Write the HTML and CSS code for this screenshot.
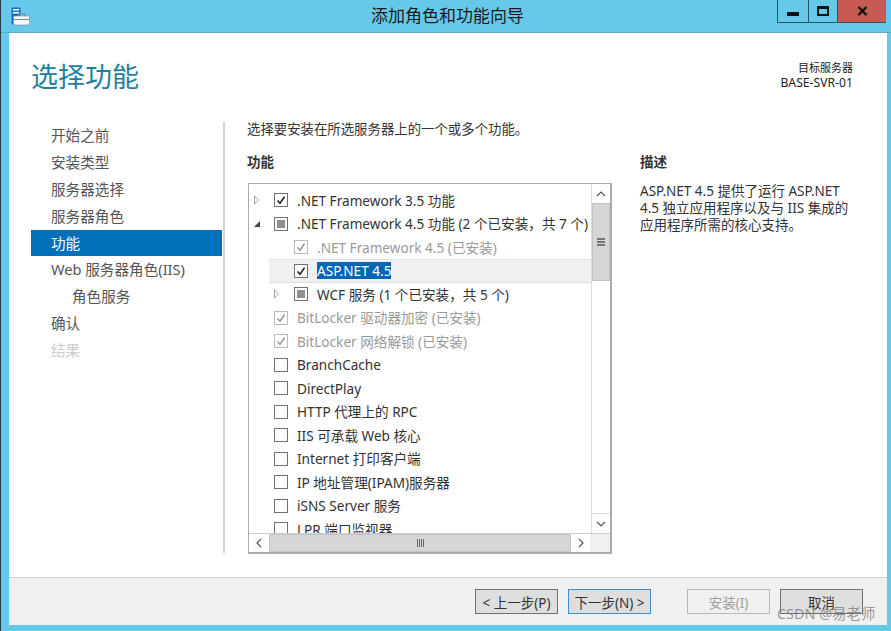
FILE: index.html
```html
<!DOCTYPE html>
<html lang="zh-CN">
<head>
<meta charset="utf-8">
<title>添加角色和功能向导</title>
<link rel="stylesheet" href="styles.css">
</head>
<body>
<div class="window">
  <header class="titlebar">
    <svg class="app-icon" width="19" height="19" viewBox="0 0 19 19">
      <rect x="0.5" y="0.5" width="9" height="17" fill="#1a6fc0"/>
      <rect x="2" y="2" width="6" height="1.5" fill="#fff"/>
      <rect x="2" y="5" width="6" height="1.5" fill="#fff"/>
      <rect x="2.5" y="9" width="16" height="9" rx="1" fill="#f4f7f9" stroke="#6e8ba0" stroke-width="0.6"/>
      <path d="M8 9V7h5.5v2" fill="none" stroke="#6e8ba0" stroke-width="1.2"/>
      <path d="M3 12.5h15" stroke="#6e8ba0" stroke-width="1"/>
    </svg>
    <div class="title-text">添加角色和功能向导</div>
    <div class="win-buttons">
      <div class="win-btn min"><span class="min-glyph"></span></div>
      <div class="win-btn max"><span class="max-glyph"></span></div>
      <div class="win-btn close"><svg width="11" height="10" viewBox="0 0 11 10"><path d="M1.5 1l8 8M9.5 1l-8 8" stroke="#111" stroke-width="2.4"/></svg></div>
    </div>
  </header>
  <div class="client">
    <div class="page-head">
      <h1 class="page-title">选择功能</h1>
      <div class="target">
        <div>目标服务器</div>
        <div class="target-name">BASE-SVR-01</div>
      </div>
    </div>
    <div class="page-body">
      <nav class="steps">
        <div class="step">开始之前</div>
        <div class="step">安装类型</div>
        <div class="step">服务器选择</div>
        <div class="step">服务器角色</div>
        <div class="step active">功能</div>
        <div class="step">Web 服务器角色(IIS)</div>
        <div class="step sub">角色服务</div>
        <div class="step">确认</div>
        <div class="step off">结果</div>
      </nav>
      <main class="main">
        <p class="intro">选择要安装在所选服务器上的一个或多个功能。</p>
        <div class="columns">
          <section class="features">
            <h2 class="col-head">功能</h2>
            <div class="listbox">
              <div class="list-top">
                <div class="rows">
                  <div class="row"><span class="exp closed"></span><span class="cb checked"><svg viewBox="0 0 12 12"><path d="M2.5 6.5l2.5 2.7 4.5-6.4" fill="none" stroke="#222" stroke-width="1.6"/></svg></span><span class="lbl">.NET Framework 3.5 功能</span></div>
                  <div class="row"><span class="exp open"></span><span class="cb"><i class="fill"></i></span><span class="lbl">.NET Framework 4.5 功能 (2 个已安装，共 7 个)</span></div>
                  <div class="row l2 dim"><span class="cb dis"><svg viewBox="0 0 12 12"><path d="M2.5 6.5l2.5 2.7 4.5-6.4" fill="none" stroke="#9a9a9a" stroke-width="1.6"/></svg></span><span class="lbl">.NET Framework 4.5 (已安装)</span></div>
                  <div class="row l2 current"><span class="cb checked"><svg viewBox="0 0 12 12"><path d="M2.5 6.5l2.5 2.7 4.5-6.4" fill="none" stroke="#222" stroke-width="1.6"/></svg></span><span class="lbl sel">ASP.NET 4.5</span></div>
                  <div class="row l2x"><span class="exp closed"></span><span class="cb"><i class="fill"></i></span><span class="lbl">WCF 服务 (1 个已安装，共 5 个)</span></div>
                  <div class="row dim"><span class="exp none"></span><span class="cb dis"><svg viewBox="0 0 12 12"><path d="M2.5 6.5l2.5 2.7 4.5-6.4" fill="none" stroke="#9a9a9a" stroke-width="1.6"/></svg></span><span class="lbl">BitLocker 驱动器加密 (已安装)</span></div>
                  <div class="row dim"><span class="exp none"></span><span class="cb dis"><svg viewBox="0 0 12 12"><path d="M2.5 6.5l2.5 2.7 4.5-6.4" fill="none" stroke="#9a9a9a" stroke-width="1.6"/></svg></span><span class="lbl">BitLocker 网络解锁 (已安装)</span></div>
                  <div class="row"><span class="exp none"></span><span class="cb"></span><span class="lbl">BranchCache</span></div>
                  <div class="row"><span class="exp none"></span><span class="cb"></span><span class="lbl">DirectPlay</span></div>
                  <div class="row"><span class="exp none"></span><span class="cb"></span><span class="lbl">HTTP 代理上的 RPC</span></div>
                  <div class="row"><span class="exp none"></span><span class="cb"></span><span class="lbl">IIS 可承载 Web 核心</span></div>
                  <div class="row"><span class="exp none"></span><span class="cb"></span><span class="lbl">Internet 打印客户端</span></div>
                  <div class="row"><span class="exp none"></span><span class="cb"></span><span class="lbl">IP 地址管理(IPAM)服务器</span></div>
                  <div class="row"><span class="exp none"></span><span class="cb"></span><span class="lbl">iSNS Server 服务</span></div>
                  <div class="row"><span class="exp none"></span><span class="cb"></span><span class="lbl">LPR 端口监视器</span></div>
                </div>
                <div class="vscroll">
                  <div class="arrow-v"><svg width="10" height="6" viewBox="0 0 10 6"><path d="M1 5l4-4 4 4" fill="none" stroke="#555" stroke-width="1.2"/></svg></div>
                  <div class="vtrack"><div class="vthumb"><span class="grip-h"></span><span class="grip-h"></span><span class="grip-h"></span></div></div>
                  <div class="arrow-v"><svg width="10" height="6" viewBox="0 0 10 6"><path d="M1 1l4 4 4-4" fill="none" stroke="#555" stroke-width="1.2"/></svg></div>
                </div>
              </div>
              <div class="hscroll">
                <div class="arrow-h"><svg width="6" height="10" viewBox="0 0 6 10"><path d="M5 1L1 5l4 4" fill="none" stroke="#555" stroke-width="1.2"/></svg></div>
                <div class="hthumb"><span class="grip-v"></span><span class="grip-v"></span><span class="grip-v"></span><span class="grip-v"></span></div>
                <div class="arrow-h"><svg width="6" height="10" viewBox="0 0 6 10"><path d="M1 1l4 4-4 4" fill="none" stroke="#555" stroke-width="1.2"/></svg></div>
                <div class="corner"></div>
              </div>
            </div>
          </section>
          <aside class="desc">
            <h2 class="col-head">描述</h2>
            <p class="desc-text">ASP.NET 4.5 提供了运行 ASP.NET 4.5 独立应用程序以及与 IIS 集成的应用程序所需的核心支持。</p>
          </aside>
        </div>
      </main>
    </div>
    <footer class="footer">
      <button class="btn">&lt; 上一步(P)</button>
      <button class="btn next">下一步(N) &gt;</button>
      <button class="btn disabled">安装(I)</button>
      <button class="btn">取消</button>
    </footer>
  </div>
  <div class="watermark">CSDN @易老师</div>
</div>
</body>
</html>
```

FILE: styles.css
```css
* { box-sizing: border-box; }
html, body { margin: 0; padding: 0; }
body {
  width: 891px;
  height: 631px;
  overflow: hidden;
  font-family: "Noto Sans", "Noto Sans CJK SC", sans-serif;
  font-size: 13.6px;
  color: #333;
  background: #67c9e9;
}
.window {
  position: relative;
  width: 891px;
  height: 631px;
  display: flex;
  flex-direction: column;
  border-left: 1px solid #2a3a42;
  padding: 0 4px 6px 8px;
  background: #67c9e9;
}
.titlebar {
  height: 33px;
  flex: none;
  display: flex;
  align-items: flex-start;
  border-bottom: 1px solid #5aa9c7;
  margin: 0 -4px 0 -8px;
  padding-left: 10px;
  position: relative;
}
.app-icon { margin-top: 7px; }
.title-text {
  position: absolute;
  left: 0;
  right: 0;
  top: 6px;
  text-align: center;
  font-size: 17px;
  line-height: 20px;
  color: #1a1a1a;
  padding-left: 3px;
}
.win-buttons {
  margin-left: auto;
  margin-right: 5px;
  display: flex;
  height: 23px;
  border: 1px solid #2f5161;
  border-top: 0;
  border-right: 0;
}
.win-btn {
  display: flex;
  align-items: center;
  justify-content: center;
}
.min { width: 31px; border-right: 1px solid #2f5161; }
.max { width: 29px; border-right: 1px solid #2f5161; }
.close { width: 48px; background: #c75a52; }
.min-glyph { width: 12px; height: 4px; background: #111; margin-top: 5px; }
.max-glyph { width: 12px; height: 10px; border: 2px solid #111; border-top-width: 3px; }
.client {
  flex: 1;
  min-height: 0;
  background: #fff;
  display: flex;
  flex-direction: column;
}
.page-head {
  height: 89px;
  flex: none;
  display: flex;
  justify-content: space-between;
  padding: 24px 34px 0 22px;
}
.page-title {
  margin: 0;
  font-size: 27px;
  line-height: 40px;
  font-weight: 400;
  color: #1d7f9f;
}
.target {
  padding-top: 3px;
  text-align: right;
  font-size: 11px;
  line-height: 15px;
  color: #222;
}
.target-name { font-size: 12.2px; }
.page-body {
  flex: 1;
  min-height: 0;
  display: flex;
  padding-left: 22px;
}
.steps {
  width: 194px;
  height: 431px;
  flex: none;
  border-right: 2px solid #d4d4d4;
  padding-right: 1px;
}
.step {
  height: 26.9px;
  line-height: 26px;
  font-size: 14.6px;
  padding-left: 20px;
  color: #555;
}
.step.active { background: #0070b8; color: #fff; }
.step.sub { padding-left: 41px; }
.step.off { color: #ccc; }
.main {
  flex: 1;
  min-width: 0;
  padding: 0 0 0 22px;
}
.intro {
  margin: 0;
  height: 22px;
  line-height: 15px;
  font-size: 13.4px;
  color: #333;
}
.columns { display: flex; margin-top: 10px; }
.features { width: 365px; flex: none; }
.col-head {
  margin: 0;
  height: 28px;
  line-height: 16px;
  font-size: 13.5px;
  font-weight: 700;
  color: #333;
}
.listbox {
  margin-top: 1px;
  margin-left: 1px;
  width: 364px;
  height: 371px;
  border: 2px solid #ababab;
  border-width: 1px 2px 2px 1px;
  display: flex;
  flex-direction: column;
  background: #fff;
}
.list-top { flex: 1; min-height: 0; display: flex; }
.rows {
  flex: 1;
  min-width: 0;
  overflow: hidden;
  padding-top: 4.5px;
  border-right: 1px solid #ddd;
}
.row {
  height: 23.5px;
  display: flex;
  align-items: center;
  padding-left: 2px;
  white-space: nowrap;
  color: #333;
}
.row.dim { color: #9a9a9a; }
.row.l2 { padding-left: 45px; }
.row.l2x { padding-left: 22px; }
.row.current {
  margin-left: 20px;
  padding-left: 25px;
  background: #f0f0f0;
  border: 1px solid #e0e0e0;
  border-width: 1px 0;
}
.exp {
  width: 23px;
  height: 10px;
  flex: none;
  display: block;
  position: relative;
}
.exp.closed::before {
  content: "";
  position: absolute;
  left: 3px;
  top: 0;
  border-left: 5px solid #a0a0a0;
  border-top: 5px solid transparent;
  border-bottom: 5px solid transparent;
}
.exp.closed::after {
  content: "";
  position: absolute;
  left: 4px;
  top: 2px;
  border-left: 3px solid #fff;
  border-top: 3px solid transparent;
  border-bottom: 3px solid transparent;
}
.exp.open::before {
  content: "";
  position: absolute;
  left: 3px;
  top: 2px;
  border-right: 6px solid #444;
  border-top: 6px solid transparent;
}
.cb {
  width: 14px;
  height: 14px;
  flex: none;
  border: 1px solid #707070;
  background: #fff;
  margin-right: 9px;
  display: flex;
  align-items: center;
  justify-content: center;
}
.cb svg { width: 12px; height: 12px; display: block; }
.cb.dis { border-color: #bbb; }
.cb .fill { width: 8px; height: 8px; background: #8f8f8f; display: block; }
.lbl { line-height: 17px; }
.lbl.sel { background: #0066b3; color: #fff; }
.vscroll {
  width: 18px;
  flex: none;
  display: flex;
  flex-direction: column;
  background: #fff;
}
.arrow-v {
  height: 19px;
  flex: none;
  display: flex;
  align-items: center;
  justify-content: center;
}
.vtrack { flex: 1; min-height: 0; background: #fff; border-bottom: 1px solid #ddd; }
.vthumb {
  height: 78px;
  background: #d6d6d6;
  border: 1px solid #c4c4c4;
  display: flex;
  flex-direction: column;
  align-items: center;
  justify-content: center;
  gap: 1px;
}
.grip-h { width: 8px; height: 2px; background: #777; }
.hscroll {
  height: 19px;
  flex: none;
  display: flex;
  border-top: 1px solid #ccc;
}
.arrow-h {
  width: 20px;
  flex: none;
  display: flex;
  align-items: center;
  justify-content: center;
}
.hthumb {
  width: 302px;
  flex: none;
  background: #d6d6d6;
  border: 1px solid #c4c4c4;
  display: flex;
  align-items: center;
  justify-content: center;
  gap: 1px;
}
.grip-v { width: 1px; height: 8px; background: #666; }
.corner { flex: 1; background: #f0f0f0; margin-left: -1px; }
.desc { margin-left: 28px; width: 214px; flex: none; }
.desc-text {
  margin: 1px 0 0;
  width: 214px;
  font-size: 13.5px;
  line-height: 17px;
  color: #333;
}
.footer {
  height: 48px;
  flex: none;
  background: #f0f0f0;
  border-top: 1px solid #d4d4d4;
  display: flex;
  align-items: flex-start;
  padding: 11px 0 0 466px;
}
.btn {
  height: 25px;
  width: 83px;
  flex: none;
  padding: 0;
  border: 1px solid #707070;
  background: #dedede;
  font-family: inherit;
  font-size: 13.5px;
  color: #333;
  margin-right: 10px;
}
.btn.next { border: 1px solid #3c8fd0; margin-right: 36px; }
.btn.disabled { background: #f0f0f0; border-color: #b8b8b8; color: #a0a0a0; }
.watermark {
  position: absolute;
  left: 776px;
  top: 605px;
  font-size: 14.4px;
  line-height: 18px;
  color: rgba(120, 120, 120, 0.75);
}
```
